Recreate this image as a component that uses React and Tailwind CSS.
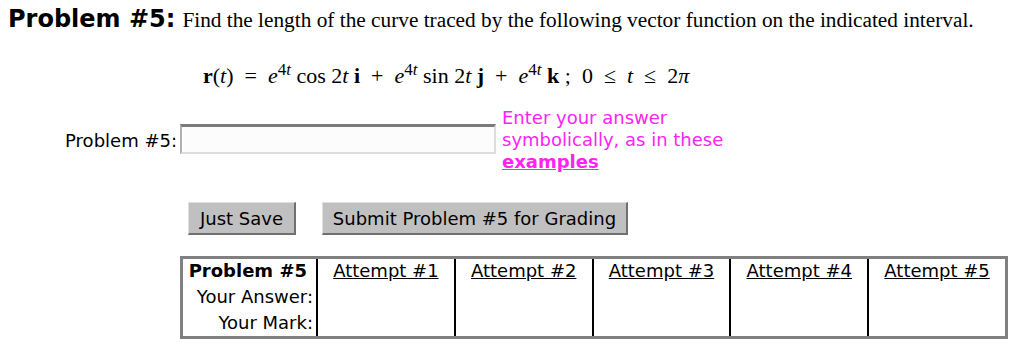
export default function App() {
  const attempts = [1, 2, 3, 4, 5]
  const sans = { fontFamily: '"DejaVu Sans", Verdana, sans-serif' }
  const serif = { fontFamily: '"Liberation Serif", "Times New Roman", serif' }

  return (
    <div className="w-[1020px] h-[350px] bg-white text-black overflow-hidden" style={sans}>
      <div className="flex items-baseline pl-[8px] pt-[4px] leading-[30px]">
        <span className="text-[24px] font-bold" style={sans}>Problem #5:</span>
        <span className="ml-[7px] text-[21.3px]" style={serif}>
          Find the length of the curve traced by the following vector function on the indicated interval.
        </span>
      </div>

      <div className="pl-[203px] mt-[28px] text-[22px] leading-[26px] whitespace-nowrap" style={serif}>
        <b>r</b>(<i>t</i>) &nbsp;=&nbsp; <i>e</i><sup className="text-[17px]">4<i>t</i></sup> cos 2<i>t</i> <b>i</b> &nbsp;+&nbsp; <i>e</i>
        <sup className="text-[17px]">4<i>t</i></sup> sin 2<i>t</i> <b>j</b> &nbsp;+&nbsp; <i>e</i>
        <sup className="text-[17px]">4<i>t</i></sup> <b>k</b> ; &nbsp;0 &nbsp;≤ &nbsp;<i>t</i> &nbsp;≤ &nbsp;2<i>π</i>
      </div>

      <div className="flex items-center mt-[15px]">
        <div className="w-[180px] text-right text-[18px] pr-[3px] pt-[4px]">Problem #5:</div>
        <input
          type="text"
          className="w-[316px] h-[30px] border-2 border-t-[3px] border-t-[#7a7a7a] border-l-[#b0b0b0] border-r-[#dcdcdc] border-b-[#dcdcdc] bg-[#fcfcfc] outline-none"
        />
        <div className="ml-[6px] mt-[3px] text-[18px] leading-[22px] text-[#ff22f0]">
          Enter your answer
          <br />
          symbolically, as in these
          <br />
          <a href="#" className="font-bold underline">examples</a>
        </div>
      </div>

      <div className="flex mt-[29px] pl-[188px] gap-[26px]">
        <button className="h-[33px] w-[108px] bg-[#c0c0c0] text-[18px] border-t border-l border-t-[#e0e0e0] border-l-[#e0e0e0] border-b-2 border-r-2 border-b-[#707070] border-r-[#707070]">Just Save</button>
        <button className="h-[33px] w-[306px] bg-[#c0c0c0] text-[18px] border-t border-l border-t-[#e0e0e0] border-l-[#e0e0e0] border-b-2 border-r-2 border-b-[#707070] border-r-[#707070]">
          Submit Problem #5 for Grading
        </button>
      </div>

      <div className="ml-[180px] mt-[21px] w-[828px] border-[3px] border-[#808080] flex text-[18px]">
        <div className="w-[133px] text-right pr-[3px]">
          <div className="font-bold leading-[24px] pr-[6px]">Problem #5</div>
          <div className="leading-[27px]">Your Answer:</div>
          <div className="leading-[26px]">Your Mark:</div>
        </div>
        {attempts.map((n) => (
          <div key={n} className="flex-1 border-l-2 border-black text-center leading-[24px]">
            <span className="underline">Attempt #{n}</span>
          </div>
        ))}
      </div>
    </div>
  )
}
